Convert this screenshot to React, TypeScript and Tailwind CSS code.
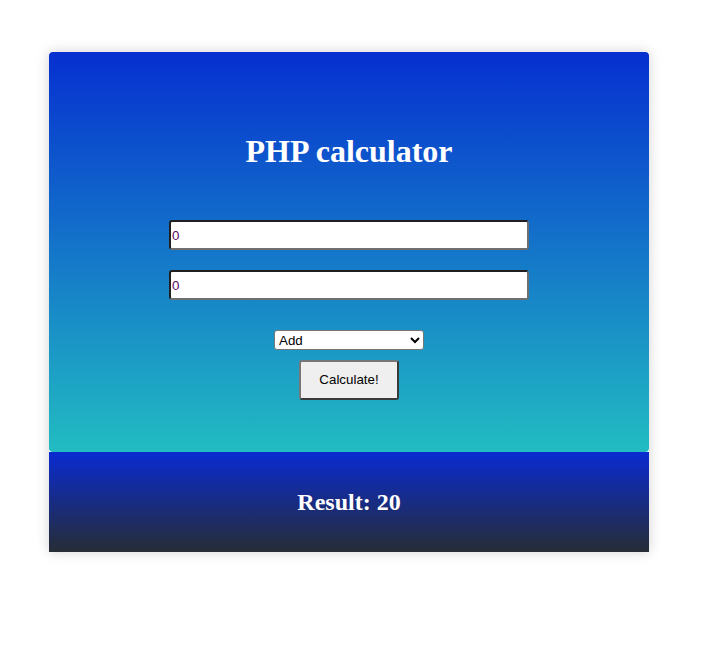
import { useState } from "react";

export default function App() {
  const [a, setA] = useState("0");
  const [b, setB] = useState("0");
  const [op, setOp] = useState("add");

  return (
    <div className="min-h-[645px] w-full bg-white pt-[52px]">
      <div className="ml-[49px] w-[600px] shadow-[0_0_12px_rgba(0,0,0,0.18)]">
        {/* Form panel */}
        <div className="flex h-[400px] flex-col items-center rounded-[4px] bg-linear-to-b/srgb from-[#0630d0] to-[#22bcc2] pt-[81px]">
          <h1 className="font-['Liberation_Serif',serif] text-[32px] font-bold leading-[37px] text-white">
            PHP calculator
          </h1>
          <input
            value={a}
            onChange={(e) => setA(e.target.value)}
            className="mt-[50px] h-[30px] w-[360px] rounded-[3px] border-2 border-t-[#1f1f1f] border-l-[#1f1f1f] border-r-[#6f6f6f] border-b-[#6f6f6f] bg-white px-[1px] font-['Liberation_Sans',sans-serif] text-[13.33px] text-[#5a0a6a] outline-none"
          />
          <input
            value={b}
            onChange={(e) => setB(e.target.value)}
            className="mt-[20px] h-[30px] w-[360px] rounded-[3px] border-2 border-t-[#1f1f1f] border-l-[#1f1f1f] border-r-[#6f6f6f] border-b-[#6f6f6f] bg-white px-[1px] font-['Liberation_Sans',sans-serif] text-[13.33px] text-[#5a0a6a] outline-none"
          />
          <select
            value={op}
            onChange={(e) => setOp(e.target.value)}
            className="mt-[30px] h-[20px] w-[150px] rounded-[3px] border border-[#767676] bg-white font-['Liberation_Sans',sans-serif] text-[13.33px] text-black"
          >
            <option value="add">Add</option>
            <option value="sub">Subtract</option>
            <option value="mul">Multiply</option>
            <option value="div">Divide</option>
          </select>
          <button className="mt-[10px] h-[40px] w-[100px] rounded-[3px] border-2 border-t-[#767676] border-l-[#767676] border-r-[#3a3a3a] border-b-[#3a3a3a] bg-[#efefef] font-['Liberation_Sans',sans-serif] text-[13.33px] text-black">
            Calculate!
          </button>
        </div>

        {/* Result panel */}
        <div className="flex h-[100px] items-center justify-center bg-linear-to-b/srgb from-[#0a2bd2] to-[#262d35]">
          <h2 className="font-['Liberation_Serif',serif] text-[24px] font-bold text-white">
            Result: 20
          </h2>
        </div>
      </div>
    </div>
  );
}
